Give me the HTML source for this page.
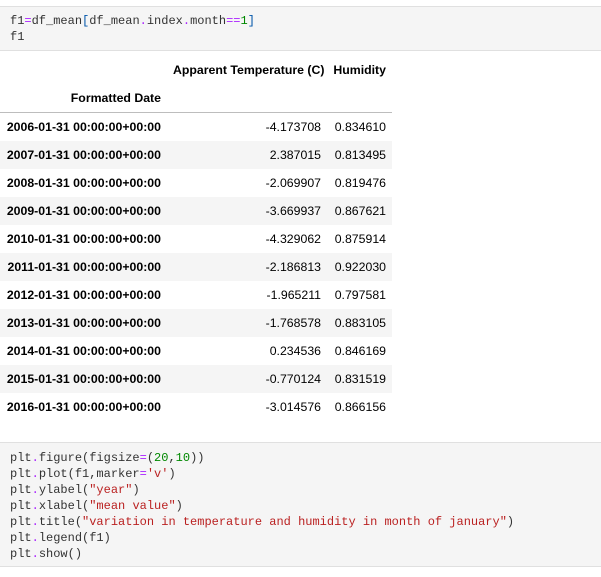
<!DOCTYPE html>
<html><head><style>
body{margin:0;background:#fff;width:601px;height:577px;position:relative;overflow:hidden}
.code{position:absolute;left:0;width:601px;background:#f5f5f5;border-top:1px solid #e0e0e0;border-bottom:1px solid #e0e0e0;font-family:"Liberation Mono",monospace;font-size:12px;line-height:16px;color:#333;white-space:pre;box-sizing:border-box;padding-left:10px}
.o{color:#aa22ff}.n{color:#008800}.s{color:#ba2121}.p{color:#0055aa}
table{position:absolute;left:0;top:56px;border-collapse:collapse;table-layout:fixed;width:392px;font-family:"Liberation Sans",sans-serif;font-size:12.3px;color:#000}
td,th{height:28px;padding:0 6px;text-align:right;white-space:nowrap;overflow:visible}
th{font-weight:bold}
tr.h2 th{border-bottom:1px solid #bdbdbd}
tbody tr:nth-child(even){background:#f5f5f5}
</style></head><body>
<div class="code" style="top:6px;height:45px;padding-top:6px">f1<span class="o">=</span>df_mean<span class="p">[</span>df_mean<span class="o">.</span>index<span class="o">.</span>month<span class="o">==</span><span class="n">1</span><span class="p">]</span>
f1</div>
<table>
<colgroup><col style="width:167px"><col style="width:160px"><col style="width:65px"></colgroup>
<thead>
<tr><th></th><th>Apparent Temperature (C)</th><th>Humidity</th></tr>
<tr class="h2"><th>Formatted Date</th><th></th><th></th></tr>
</thead>
<tbody>
<tr><th>2006-01-31 00:00:00+00:00</th><td>-4.173708</td><td>0.834610</td></tr>
<tr><th>2007-01-31 00:00:00+00:00</th><td>2.387015</td><td>0.813495</td></tr>
<tr><th>2008-01-31 00:00:00+00:00</th><td>-2.069907</td><td>0.819476</td></tr>
<tr><th>2009-01-31 00:00:00+00:00</th><td>-3.669937</td><td>0.867621</td></tr>
<tr><th>2010-01-31 00:00:00+00:00</th><td>-4.329062</td><td>0.875914</td></tr>
<tr><th>2011-01-31 00:00:00+00:00</th><td>-2.186813</td><td>0.922030</td></tr>
<tr><th>2012-01-31 00:00:00+00:00</th><td>-1.965211</td><td>0.797581</td></tr>
<tr><th>2013-01-31 00:00:00+00:00</th><td>-1.768578</td><td>0.883105</td></tr>
<tr><th>2014-01-31 00:00:00+00:00</th><td>0.234536</td><td>0.846169</td></tr>
<tr><th>2015-01-31 00:00:00+00:00</th><td>-0.770124</td><td>0.831519</td></tr>
<tr><th>2016-01-31 00:00:00+00:00</th><td>-3.014576</td><td>0.866156</td></tr>
</tbody></table>
<div class="code" style="top:442px;height:125px;padding-top:7px">plt<span class="o">.</span>figure(figsize<span class="o">=</span>(<span class="n">20</span>,<span class="n">10</span>))
plt<span class="o">.</span>plot(f1,marker<span class="o">=</span><span class="s">'v'</span>)
plt<span class="o">.</span>ylabel(<span class="s">"year"</span>)
plt<span class="o">.</span>xlabel(<span class="s">"mean value"</span>)
plt<span class="o">.</span>title(<span class="s">"variation in temperature and humidity in month of january"</span>)
plt<span class="o">.</span>legend(f1)
plt<span class="o">.</span>show()</div>
</body></html>
